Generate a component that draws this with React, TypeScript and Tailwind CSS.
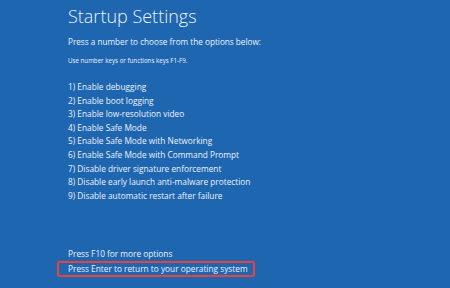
const options = [
  "1) Enable debugging",
  "2) Enable boot logging",
  "3) Enable low-resolution video",
  "4) Enable Safe Mode",
  "5) Enable Safe Mode with Networking",
  "6) Enable Safe Mode with Command Prompt",
  "7) Disable driver signature enforcement",
  "8) Disable early launch anti-malware protection",
  "9) Disable automatic restart after failure",
];

export default function App() {
  return (
    <div
      className="w-[450px] h-[288px] bg-[#1f66b0] text-[#eef3fa] flex flex-col pl-[68px] overflow-hidden whitespace-nowrap"
      style={{ fontFamily: '"Open Sans", "Noto Sans", sans-serif' }}
    >
      <h1 className="mt-[3px] text-[18px] leading-[26px] font-light">Startup Settings</h1>
      <p className="mt-[7px] text-[8.2px] leading-[12px]">Press a number to choose from the options below:</p>
      <p className="mt-[9px] text-[6.2px] leading-[8px]">Use number keys or functions keys F1-F9.</p>
      <ul className="mt-[15px] flex flex-col text-[8.3px]">
        {options.map((o) => (
          <li key={o} className="leading-[13.6px]">{o}</li>
        ))}
      </ul>
      <div className="mt-auto mb-[11px] flex flex-col text-[8.3px]">
        <p className="leading-[14px]">Press F10 for more options</p>
        <div className="-ml-[11px] w-[198px] border-2 border-[#e8413f] rounded-[3px] pl-[9px] leading-[12.5px]">
          Press Enter to return to your operating system
        </div>
      </div>
    </div>
  );
}
